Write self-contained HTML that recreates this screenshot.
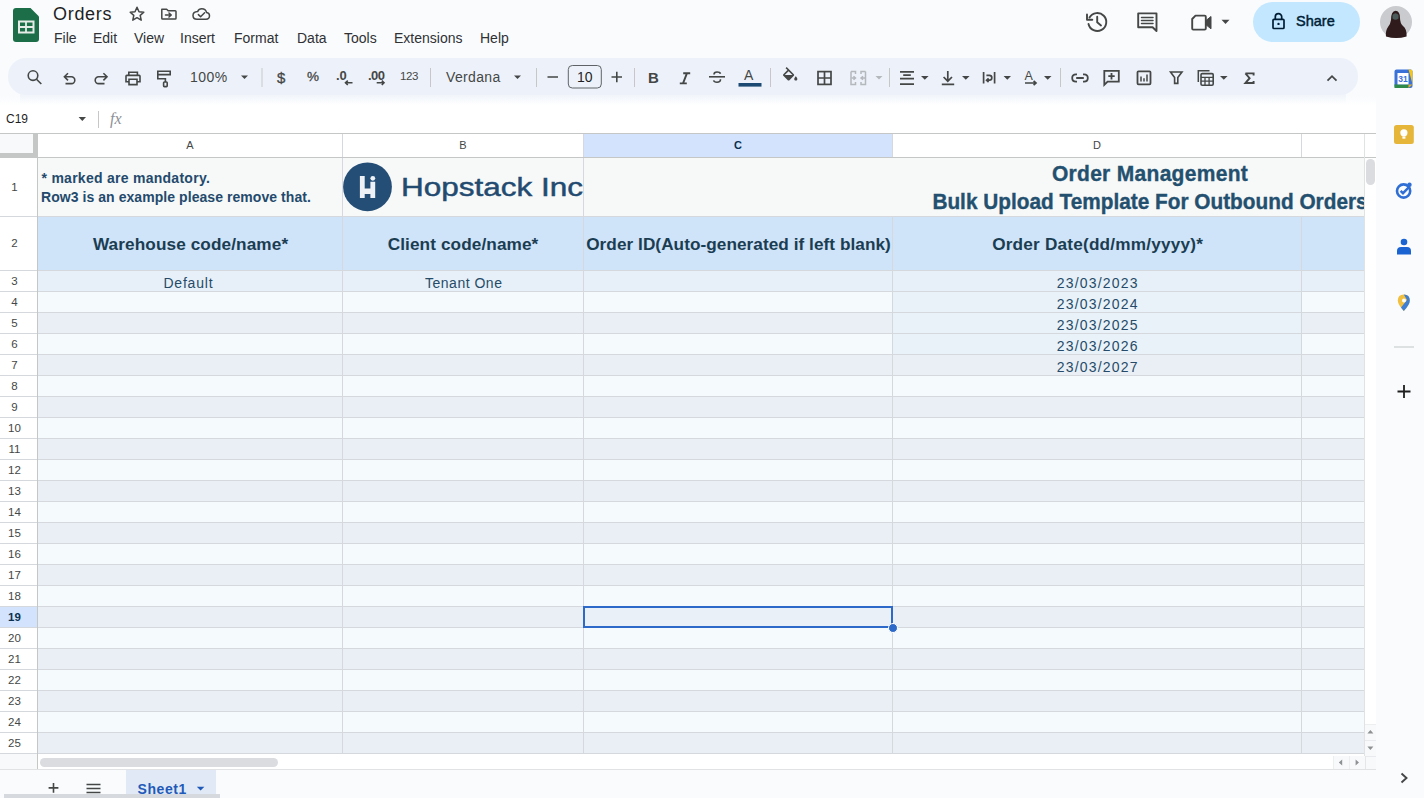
<!DOCTYPE html>
<html><head><meta charset="utf-8">
<style>
*{box-sizing:border-box;margin:0;padding:0}
html,body{width:1424px;height:798px;overflow:hidden;background:#f9fbfd;font-family:"Liberation Sans",sans-serif;color:#1f1f1f;position:relative}
.a{position:absolute}
.menu{position:absolute;top:29.5px;font-size:14px;color:#303134;white-space:nowrap}
.tb{position:absolute;left:8px;top:58px;width:1350px;height:37px;background:#edf2fa;border-radius:18px}
.sep{position:absolute;top:68px;width:1px;height:19px;background:#c7c7c7}
svg{position:absolute;overflow:visible}
.ic{fill:none;stroke:#444746;stroke-width:1.6}
.icf{fill:#444746}
#grid{position:absolute;left:0;top:133px;width:1376px;height:637px;background:#fff;overflow:hidden}
.hl{position:absolute;height:1px;background:#e2e2e2}
.vl{position:absolute;width:1px;background:#e2e2e2}
.rh{position:absolute;left:0;width:37px;font-size:11px;color:#444746;text-align:center}
.ch{position:absolute;top:0;height:24px;line-height:24px;font-size:11px;color:#444746;text-align:center}
.cell{position:absolute;font-family:"Liberation Sans",sans-serif;color:#1c3a56;text-align:center;white-space:nowrap;overflow:hidden}
</style></head><body>
<!-- header -->
<div class="a" style="left:53px;top:3.5px;font-size:18px;color:#1f1f1f;letter-spacing:0.7px">Orders</div>
<div class="menu" style="left:54px">File</div>
<div class="menu" style="left:93px">Edit</div>
<div class="menu" style="left:134px">View</div>
<div class="menu" style="left:180px">Insert</div>
<div class="menu" style="left:234px">Format</div>
<div class="menu" style="left:297px">Data</div>
<div class="menu" style="left:344px">Tools</div>
<div class="menu" style="left:394px">Extensions</div>
<div class="menu" style="left:480px">Help</div>

<div class="a" style="left:0;top:106px;width:1376px;height:27px;background:#fff"></div>
<div class="a" style="left:0;top:96px;width:1376px;height:10px;background:linear-gradient(#f9fbfd,#fff)"></div>
<div class="tb"></div>
<div class="a" style="left:20px;top:90px;width:1326px;height:14px;background:linear-gradient(#edf2fa,rgba(255,255,255,0))"></div>
<svg class="a" style="left:0;top:0" width="1424" height="132" viewBox="0 0 1424 132">
 <!-- logo -->
 <path d="M16 8H30.5L39 16.5V39Q39 42 36 42H16Q13 42 13 39V11Q13 8 16 8Z" fill="#1b6e47"/>
 <rect x="19" y="21.5" width="14.5" height="11" fill="none" stroke="#e6ebe8" stroke-width="2"/>
 <path d="M19 27H33.5M26 21.5V32.5" stroke="#e6ebe8" stroke-width="1.8"/>
 <g fill="none" stroke="#444746" stroke-width="1.5" stroke-linejoin="round" stroke-linecap="round">
 <!-- star -->
 <path d="M137 7.2L139 11.7L143.8 12.2L140.2 15.4L141.2 20.2L137 17.7L132.8 20.2L133.8 15.4L130.2 12.2L135 11.7Z"/>
 <!-- folder -->
 <path d="M161.8 9.2H166.6L168.2 10.8H175.2Q176 10.8 176 11.6V18.2Q176 19 175.2 19H162.6Q161.8 19 161.8 18.2Z"/>
 <path d="M165.5 15H171M169 13L171.2 15L169 17" stroke-width="1.6"/>
 <!-- cloud -->
 <path d="M197 19.2H206Q209.5 19.2 209.5 15.8Q209.5 12.8 206.6 12.5Q205.6 8.8 201.8 8.8Q198.8 8.8 197.6 11.6Q193 11.9 193 15.4Q193 19.2 197 19.2Z"/>
 <path d="M198.4 14.6L200.6 16.7L204.6 12.8"/>
 <!-- history -->
 <path d="M1089.5 17.5A9 9 0 1 1 1088.5 24" stroke-width="1.9"/>
 <path d="M1087 14.5V19.8H1092.3" stroke-width="1.9"/>
 <path d="M1097.2 16.8V22.3L1101 25.5" stroke-width="1.9"/>
 <!-- comment -->
 <path d="M1138.2 13.4H1156.5V31L1152.6 27.2H1138.2Z" stroke-width="1.9"/>
 <path d="M1141.5 17.5H1153M1141.5 20.5H1153M1141.5 23.5H1153" stroke-width="1.5"/>
 <!-- meet -->
 <path d="M1195.5 15.6H1204.6Q1205.8 15.6 1205.8 16.8V28.6Q1205.8 29.6 1204.6 29.6H1193.2Q1192.2 29.6 1192.2 28.6V19Z" stroke-width="1.9"/>
 <path d="M1206 20.5L1211 16.5V28.8L1206 24.8Z" fill="#444746" stroke-width="1"/>
 </g>
 <path d="M1221.5 19.8H1229.5L1225.5 24Z" fill="#444746"/>
 <!-- share pill -->
 <rect x="1253" y="2" width="107" height="40" rx="20" fill="#c2e7ff"/>
 <g fill="none" stroke="#001d35" stroke-width="1.7">
  <rect x="1273" y="19.3" width="11" height="9.2" rx="1"/>
  <path d="M1275.3 19.3V16.8A3.2 3.2 0 0 1 1281.7 16.8V19.3"/>
 </g>
 <circle cx="1278.5" cy="23.9" r="1.2" fill="#001d35"/>
 <!-- avatar -->
 <circle cx="1396" cy="22" r="16" fill="#c9cbce"/>
 <path d="M1386 36.5Q1385.2 31 1388 27Q1390.5 24 1391 20Q1391 11 1395.5 10.8Q1400 11 1400 18Q1400 23 1403 26Q1407 29 1406.6 36.5Q1396 39.5 1386 36.5Z" fill="#2f1b1c"/>
 <path d="M1392.5 15Q1395.5 11.5 1398.5 15V18.5Q1395.5 21 1392.5 18.5Z" fill="#4d5a5a"/>

 <!-- toolbar icons -->
 <g fill="none" stroke="#444746" stroke-width="1.6" stroke-linecap="butt" stroke-linejoin="miter">
  <circle cx="33" cy="75.6" r="4.8"/>
  <path d="M36.5 79.2L41.3 84"/>
  <path d="M68 73.3L64.4 76.8L68 80.4M64.4 76.8H71.4A3.4 3.4 0 0 1 71.4 83.6H65.5"/>
  <path d="M103.4 73.3L107 76.8L103.4 80.4M107 76.8H98.6A3.4 3.4 0 0 0 98.6 83.6H104.5"/>
  <path d="M128.8 75.4V72.2H137.4V75.4M129 81.8H126V76.2Q126 75.4 126.8 75.4H139.2Q140 75.4 140 76.2V81.8H137M129 79.2H137V84.6H129Z"/>
  <path d="M157.8 71.2H170.2V74.6H157.8ZM157.8 74.6V78.8H165.4V82"/>
  <rect x="163.6" y="82" width="3.6" height="4.6" rx="0.8"/>
 </g>
 <path d="M241 75.5H248L244.5 79Z" fill="#444746"/>
 <path d="M514 75.5H521L517.5 79Z" fill="#444746"/>
 <rect x="261.5" y="68" width="1" height="19" fill="#c7c7c7"/>
 <rect x="430" y="68" width="1" height="19" fill="#c7c7c7"/>
 <rect x="536" y="68" width="1" height="19" fill="#c7c7c7"/>
 <rect x="634" y="68" width="1" height="19" fill="#c7c7c7"/>
 <rect x="770" y="68" width="1" height="19" fill="#c7c7c7"/>
 <rect x="889" y="68" width="1" height="19" fill="#c7c7c7"/>
 <rect x="1060" y="68" width="1" height="19" fill="#c7c7c7"/>
 <g fill="none" stroke="#444746" stroke-width="1.6">
  <path d="M345.5 82.8H352.5M347.8 80.6L345.5 82.8L347.8 85"/>
  <path d="M376.7 82.8H384M381.8 80.6L384 82.8L381.8 85"/>
  <path d="M547.5 77H558M611.5 77H622M616.8 71.8V82.2"/>
  <rect x="568.3" y="65.5" width="33" height="22.5" rx="4" stroke="#5f6368" stroke-width="1"/>
  <path d="M709 76.8H725" />
  <path d="M714 74.5Q714 72 717 72Q720 72 720.5 73.8M720.5 79.2Q720.5 82.2 717 82.2Q714 82.2 713.6 80.4"/>
 </g>
 <rect x="738.5" y="83" width="23" height="3.6" fill="#1c4a72"/>
 <path d="M683.2 73.2H690.2M679.8 83.4H686.8M687 73.2L683 83.4" fill="none" stroke="#444746" stroke-width="1.9"/>
 <!-- paint bucket -->
 <path transform="translate(780.6 67) scale(0.8)" d="M16.56 8.94L7.62 0 6.21 1.41l2.38 2.38-5.15 5.15c-.59.59-.59 1.54 0 2.12l5.5 5.5c.29.29.68.44 1.060.44s.77-.15 1.06-.44l5.5-5.5c.59-.58.59-1.53 0-2.12zM5.21 10L10 5.21 14.79 10H5.21zM19 11.5s-2 2.17-2 3.5c0 1.1.9 2 2 2s2-.9 2-2c0-1.33-2-3.5-2-3.5z" fill="#444746"/>
 <!-- borders -->
 <g fill="none" stroke="#444746" stroke-width="1.7">
  <rect x="818" y="71.6" width="13" height="12.8"/>
  <path d="M824.5 71.6V84.4M818 78H831"/>
 </g>
 <!-- merge disabled -->
 <g fill="none" stroke="#b4b8bd" stroke-width="1.5">
  <path d="M851 71.5H855.5V74M851 71.5V84.5H855.5V82M865.5 71.5H861V74M865.5 71.5V84.5H861V82"/>
  <path d="M851.5 78H855.5M853.5 76.2L855.5 78L853.5 79.8M865 78H861M863 76.2L861 78L863 79.8"/>
 </g>
 <path d="M875.5 76H882.5L879 79.5Z" fill="#b4b8bd"/>
 <!-- align -->
 <g fill="none" stroke="#444746" stroke-width="1.7">
  <path d="M900 71.8H914M903.2 75.2H910.8M900 78.6H914M900 84.2H914"/>
  <path d="M947.8 71V81.2M943.6 77L947.8 81.2L952 77M941.8 84.4H954.2"/>
  <path d="M983.6 72V83.4M994.6 72V83.4M986.4 75.4H989.4Q991.8 75.4 991.8 77.8Q991.8 80.2 989.4 80.2H987M988.6 78.4L986.6 80.2L988.6 82"/>
  <path d="M1025 83H1036M1033.6 80.8L1036 83L1033.6 85.2"/>
  <path d="M1038 78A6 0 0 0 0 1038 78"/>
 </g>
 <path d="M921 76H928.6L924.8 79.7Z M962 76H969.6L965.8 79.7Z M1003.6 76H1011L1007.3 79.7Z M1044 76H1051.5L1047.7 79.7Z M1220 76H1227.6L1223.8 79.7Z" fill="#444746"/>
 <text x="1024.6" y="80" font-family="Liberation Sans" font-size="12.5" fill="#444746">A</text>
 <!-- link -->
 <g fill="none" stroke="#444746" stroke-width="1.8">
  <path d="M1077 74.3H1076Q1072.2 74.3 1072.2 78Q1072.2 81.7 1076 81.7H1077M1083 74.3H1084Q1087.8 74.3 1087.8 78Q1087.8 81.7 1084 81.7H1083M1076.2 78H1083.8"/>
  <path d="M1104.3 70.8H1118.8V81.6H1107.6L1104.3 84.9Z"/>
  <path d="M1111.5 73V79.4M1108.3 76.2H1114.7"/>
  <rect x="1137.5" y="71.3" width="13" height="13" rx="1"/>
  <path d="M1141 76.5V81.5M1144 78.2V81.5M1147 74.5V81.5" stroke-width="1.5"/>
  <path d="M1170.5 72H1182L1177.8 77.6V83.4H1174.6V77.6Z" stroke-width="1.6"/>
  <path d="M1209.5 70.8H1198.3V82" stroke-width="1.5"/>
  <rect x="1201" y="73.6" width="12.2" height="11.6" rx="1.2" stroke-width="1.6"/>
  <path d="M1201 77.4H1213.2M1201 81.2H1213.2M1205 77.4V85.2M1209.1 77.4V85.2" stroke-width="1.3"/>
  <path d="M1245.4 73.4H1253.6V75.4M1245.4 73.4L1249.6 78.2L1245.4 83H1253.6V81" stroke-width="1.9" stroke-linejoin="miter"/>
  <path d="M1327.5 80.6L1332 76.2L1336.5 80.6" stroke-width="1.8"/>
 </g>
 <!-- formula bar -->
 <path d="M78.6 117H86L82.3 121Z" fill="#444746"/>
 <rect x="98" y="111" width="1" height="17" fill="#c7c7c7"/>
</svg>
<div class="a" style="left:1296px;top:13px;font-size:14.5px;color:#001d35;-webkit-text-stroke:0.45px #001d35;letter-spacing:0px">Share</div>
<div class="a" style="left:190px;top:69px;font-size:14px;color:#444746;letter-spacing:0.5px">100%</div>
<div class="a" style="left:277px;top:68.5px;font-size:15px;color:#444746;-webkit-text-stroke:0.3px #444746">$</div>
<div class="a" style="left:307px;top:69px;font-size:13.5px;color:#444746;-webkit-text-stroke:0.3px #444746">%</div>
<div class="a" style="left:336px;top:68px;font-size:13px;color:#444746;font-weight:bold">.0</div>
<div class="a" style="left:368px;top:68px;font-size:13px;color:#444746;font-weight:bold;letter-spacing:-0.5px">.00</div>
<div class="a" style="left:400px;top:70px;font-size:11.5px;color:#444746;letter-spacing:-0.4px">123</div>
<div class="a" style="left:446px;top:69px;font-size:14px;color:#444746;letter-spacing:0.35px">Verdana</div>
<div class="a" style="left:577px;top:69px;font-size:14px;color:#1f1f1f">10</div>
<div class="a" style="left:648px;top:68.5px;font-size:15px;color:#444746;font-weight:bold">B</div>

<div class="a" style="left:744px;top:67px;font-size:14px;color:#444746">A</div>
<div class="a" style="left:6px;top:111.8px;font-size:12px;color:#1f1f1f">C19</div>
<div class="a" style="left:110px;top:110px;font-size:16px;color:#8d9096;font-family:'Liberation Serif',serif;font-style:italic">fx</div>

<div class="a" style="left:0;top:133px;width:1376px;height:637px;background:#fff"></div>
<div class="a" style="left:38px;top:158px;width:1326px;height:58px;background:#f7f8f8"></div>
<div class="a" style="left:38px;top:217px;width:1326px;height:53px;background:#cfe3f9"></div>
<div class="a" style="left:38px;top:271px;width:1326px;height:20px;background:#e7f0f8"></div>
<div class="a" style="left:38px;top:292px;width:1326px;height:20px;background:#f5fafd"></div>
<div class="a" style="left:893px;top:292px;width:408px;height:20px;background:#e9f2f8"></div>
<div class="a" style="left:38px;top:313px;width:1326px;height:20px;background:#eaeff6"></div>
<div class="a" style="left:893px;top:313px;width:408px;height:20px;background:#e9f2f8"></div>
<div class="a" style="left:38px;top:334px;width:1326px;height:20px;background:#f5fafd"></div>
<div class="a" style="left:893px;top:334px;width:408px;height:20px;background:#e9f2f8"></div>
<div class="a" style="left:38px;top:355px;width:1326px;height:20px;background:#eaeff6"></div>
<div class="a" style="left:38px;top:376px;width:1326px;height:20px;background:#f5fafd"></div>
<div class="a" style="left:38px;top:397px;width:1326px;height:20px;background:#eaeff6"></div>
<div class="a" style="left:38px;top:418px;width:1326px;height:20px;background:#f5fafd"></div>
<div class="a" style="left:38px;top:439px;width:1326px;height:20px;background:#eaeff6"></div>
<div class="a" style="left:38px;top:460px;width:1326px;height:20px;background:#f5fafd"></div>
<div class="a" style="left:38px;top:481px;width:1326px;height:20px;background:#eaeff6"></div>
<div class="a" style="left:38px;top:502px;width:1326px;height:20px;background:#f5fafd"></div>
<div class="a" style="left:38px;top:523px;width:1326px;height:20px;background:#eaeff6"></div>
<div class="a" style="left:38px;top:544px;width:1326px;height:20px;background:#f5fafd"></div>
<div class="a" style="left:38px;top:565px;width:1326px;height:20px;background:#eaeff6"></div>
<div class="a" style="left:38px;top:586px;width:1326px;height:20px;background:#f5fafd"></div>
<div class="a" style="left:38px;top:607px;width:1326px;height:20px;background:#eaeff6"></div>
<div class="a" style="left:38px;top:628px;width:1326px;height:20px;background:#f5fafd"></div>
<div class="a" style="left:38px;top:649px;width:1326px;height:20px;background:#eaeff6"></div>
<div class="a" style="left:38px;top:670px;width:1326px;height:20px;background:#f5fafd"></div>
<div class="a" style="left:38px;top:691px;width:1326px;height:20px;background:#eaeff6"></div>
<div class="a" style="left:38px;top:712px;width:1326px;height:20px;background:#f5fafd"></div>
<div class="a" style="left:38px;top:733px;width:1326px;height:20px;background:#eaeff6"></div>
<div class="a" style="left:0;top:216px;width:1364px;height:1px;background:#d5d8dd"></div>
<div class="a" style="left:0;top:270px;width:1364px;height:1px;background:#d5d8dd"></div>
<div class="a" style="left:0;top:291px;width:1364px;height:1px;background:#d5d8dd"></div>
<div class="a" style="left:0;top:312px;width:1364px;height:1px;background:#d5d8dd"></div>
<div class="a" style="left:0;top:333px;width:1364px;height:1px;background:#d5d8dd"></div>
<div class="a" style="left:0;top:354px;width:1364px;height:1px;background:#d5d8dd"></div>
<div class="a" style="left:0;top:375px;width:1364px;height:1px;background:#d5d8dd"></div>
<div class="a" style="left:0;top:396px;width:1364px;height:1px;background:#d5d8dd"></div>
<div class="a" style="left:0;top:417px;width:1364px;height:1px;background:#d5d8dd"></div>
<div class="a" style="left:0;top:438px;width:1364px;height:1px;background:#d5d8dd"></div>
<div class="a" style="left:0;top:459px;width:1364px;height:1px;background:#d5d8dd"></div>
<div class="a" style="left:0;top:480px;width:1364px;height:1px;background:#d5d8dd"></div>
<div class="a" style="left:0;top:501px;width:1364px;height:1px;background:#d5d8dd"></div>
<div class="a" style="left:0;top:522px;width:1364px;height:1px;background:#d5d8dd"></div>
<div class="a" style="left:0;top:543px;width:1364px;height:1px;background:#d5d8dd"></div>
<div class="a" style="left:0;top:564px;width:1364px;height:1px;background:#d5d8dd"></div>
<div class="a" style="left:0;top:585px;width:1364px;height:1px;background:#d5d8dd"></div>
<div class="a" style="left:0;top:606px;width:1364px;height:1px;background:#d5d8dd"></div>
<div class="a" style="left:0;top:627px;width:1364px;height:1px;background:#d5d8dd"></div>
<div class="a" style="left:0;top:648px;width:1364px;height:1px;background:#d5d8dd"></div>
<div class="a" style="left:0;top:669px;width:1364px;height:1px;background:#d5d8dd"></div>
<div class="a" style="left:0;top:690px;width:1364px;height:1px;background:#d5d8dd"></div>
<div class="a" style="left:0;top:711px;width:1364px;height:1px;background:#d5d8dd"></div>
<div class="a" style="left:0;top:732px;width:1364px;height:1px;background:#d5d8dd"></div>
<div class="a" style="left:0;top:753px;width:1364px;height:1px;background:#d5d8dd"></div>
<div class="a" style="left:342px;top:134px;width:1px;height:619px;background:#d5d8dd"></div>
<div class="a" style="left:583px;top:134px;width:1px;height:619px;background:#d5d8dd"></div>
<div class="a" style="left:892px;top:134px;width:1px;height:23px;background:#d5d8dd"></div>
<div class="a" style="left:892px;top:216px;width:1px;height:537px;background:#d5d8dd"></div>
<div class="a" style="left:1301px;top:134px;width:1px;height:23px;background:#d5d8dd"></div>
<div class="a" style="left:1301px;top:216px;width:1px;height:537px;background:#d5d8dd"></div>
<div class="a" style="left:0;top:133px;width:1376px;height:1px;background:#c4c7c5"></div>
<div class="a" style="left:0;top:157px;width:1376px;height:1px;background:#c4c7c5"></div>
<div class="a" style="left:37px;top:134px;width:1px;height:619px;background:#c4c7c5"></div>
<div class="a" style="left:584px;top:134px;width:308px;height:23px;background:#d3e3fd"></div>
<div class="a" style="left:0;top:134px;width:33px;height:19px;background:#f8f9fa"></div>
<div class="a" style="left:33px;top:134px;width:4px;height:23px;background:#c4c7c5"></div>
<div class="a" style="left:0;top:153px;width:37px;height:4px;background:#c4c7c5"></div>
<div class="a" style="left:38px;top:134px;width:304px;height:23px;line-height:23px;text-align:center;font-size:11px;font-weight:normal;color:#444746">A</div>
<div class="a" style="left:343px;top:134px;width:240px;height:23px;line-height:23px;text-align:center;font-size:11px;font-weight:normal;color:#444746">B</div>
<div class="a" style="left:584px;top:134px;width:308px;height:23px;line-height:23px;text-align:center;font-size:11px;font-weight:bold;color:#0b3050">C</div>
<div class="a" style="left:893px;top:134px;width:408px;height:23px;line-height:23px;text-align:center;font-size:11px;font-weight:normal;color:#444746">D</div>
<div class="a" style="left:0;top:607px;width:37px;height:20px;background:#d3e3fd"></div>
<div class="a" style="left:0;top:158px;width:29px;height:58px;line-height:58px;text-align:center;font-size:11.5px;font-weight:normal;color:#444746">1</div>
<div class="a" style="left:0;top:217px;width:29px;height:53px;line-height:53px;text-align:center;font-size:11.5px;font-weight:normal;color:#444746">2</div>
<div class="a" style="left:0;top:271px;width:29px;height:20px;line-height:20px;text-align:center;font-size:11.5px;font-weight:normal;color:#444746">3</div>
<div class="a" style="left:0;top:292px;width:29px;height:20px;line-height:20px;text-align:center;font-size:11.5px;font-weight:normal;color:#444746">4</div>
<div class="a" style="left:0;top:313px;width:29px;height:20px;line-height:20px;text-align:center;font-size:11.5px;font-weight:normal;color:#444746">5</div>
<div class="a" style="left:0;top:334px;width:29px;height:20px;line-height:20px;text-align:center;font-size:11.5px;font-weight:normal;color:#444746">6</div>
<div class="a" style="left:0;top:355px;width:29px;height:20px;line-height:20px;text-align:center;font-size:11.5px;font-weight:normal;color:#444746">7</div>
<div class="a" style="left:0;top:376px;width:29px;height:20px;line-height:20px;text-align:center;font-size:11.5px;font-weight:normal;color:#444746">8</div>
<div class="a" style="left:0;top:397px;width:29px;height:20px;line-height:20px;text-align:center;font-size:11.5px;font-weight:normal;color:#444746">9</div>
<div class="a" style="left:0;top:418px;width:29px;height:20px;line-height:20px;text-align:center;font-size:11.5px;font-weight:normal;color:#444746">10</div>
<div class="a" style="left:0;top:439px;width:29px;height:20px;line-height:20px;text-align:center;font-size:11.5px;font-weight:normal;color:#444746">11</div>
<div class="a" style="left:0;top:460px;width:29px;height:20px;line-height:20px;text-align:center;font-size:11.5px;font-weight:normal;color:#444746">12</div>
<div class="a" style="left:0;top:481px;width:29px;height:20px;line-height:20px;text-align:center;font-size:11.5px;font-weight:normal;color:#444746">13</div>
<div class="a" style="left:0;top:502px;width:29px;height:20px;line-height:20px;text-align:center;font-size:11.5px;font-weight:normal;color:#444746">14</div>
<div class="a" style="left:0;top:523px;width:29px;height:20px;line-height:20px;text-align:center;font-size:11.5px;font-weight:normal;color:#444746">15</div>
<div class="a" style="left:0;top:544px;width:29px;height:20px;line-height:20px;text-align:center;font-size:11.5px;font-weight:normal;color:#444746">16</div>
<div class="a" style="left:0;top:565px;width:29px;height:20px;line-height:20px;text-align:center;font-size:11.5px;font-weight:normal;color:#444746">17</div>
<div class="a" style="left:0;top:586px;width:29px;height:20px;line-height:20px;text-align:center;font-size:11.5px;font-weight:normal;color:#444746">18</div>
<div class="a" style="left:0;top:607px;width:29px;height:20px;line-height:20px;text-align:center;font-size:11.5px;font-weight:bold;color:#0b3050">19</div>
<div class="a" style="left:0;top:628px;width:29px;height:20px;line-height:20px;text-align:center;font-size:11.5px;font-weight:normal;color:#444746">20</div>
<div class="a" style="left:0;top:649px;width:29px;height:20px;line-height:20px;text-align:center;font-size:11.5px;font-weight:normal;color:#444746">21</div>
<div class="a" style="left:0;top:670px;width:29px;height:20px;line-height:20px;text-align:center;font-size:11.5px;font-weight:normal;color:#444746">22</div>
<div class="a" style="left:0;top:691px;width:29px;height:20px;line-height:20px;text-align:center;font-size:11.5px;font-weight:normal;color:#444746">23</div>
<div class="a" style="left:0;top:712px;width:29px;height:20px;line-height:20px;text-align:center;font-size:11.5px;font-weight:normal;color:#444746">24</div>
<div class="a" style="left:0;top:733px;width:29px;height:20px;line-height:20px;text-align:center;font-size:11.5px;font-weight:normal;color:#444746">25</div>
<div class="a" style="left:41.5px;top:170.9px;line-height:14px;font-size:14px;font-weight:bold;letter-spacing:0.27px;color:#234a6c;white-space:nowrap;">* marked are mandatory.</div>
<div class="a" style="left:41px;top:189.85px;line-height:14px;font-size:14px;font-weight:bold;letter-spacing:0.06px;color:#234a6c;white-space:nowrap;">Row3 is an example please remove that.</div>
<div class="a" style="left:-109.5px;top:236px;width:600px;text-align:center;line-height:17.2px;font-size:17.2px;font-weight:bold;letter-spacing:0.1px;text-indent:0.1px;color:#1b3d52;white-space:nowrap;font-family:'Liberation Sans';">Warehouse code/name*</div>
<div class="a" style="left:163px;top:236px;width:600px;text-align:center;line-height:17.2px;font-size:17.2px;font-weight:bold;letter-spacing:0.1px;text-indent:0.1px;color:#1b3d52;white-space:nowrap;font-family:'Liberation Sans';">Client code/name*</div>
<div class="a" style="left:438.5px;top:236px;width:600px;text-align:center;line-height:17.2px;font-size:17.2px;font-weight:bold;letter-spacing:0.05px;text-indent:0.05px;color:#1b3d52;white-space:nowrap;font-family:'Liberation Sans';">Order ID(Auto-generated if left blank)</div>
<div class="a" style="left:797.5px;top:236px;width:600px;text-align:center;line-height:17.2px;font-size:17.2px;font-weight:bold;letter-spacing:0.2px;text-indent:0.2px;color:#1b3d52;white-space:nowrap;font-family:'Liberation Sans';">Order Date(dd/mm/yyyy)*</div>
<div class="a" style="left:-112px;top:276.05px;width:600px;text-align:center;line-height:14px;font-size:14px;font-weight:normal;letter-spacing:0.8px;text-indent:0.8px;color:#264b68;white-space:nowrap;font-family:'Liberation Sans';">Default</div>
<div class="a" style="left:163.5px;top:276.05px;width:600px;text-align:center;line-height:14px;font-size:14px;font-weight:normal;letter-spacing:0.5px;text-indent:0.5px;color:#264b68;white-space:nowrap;font-family:'Liberation Sans';">Tenant One</div>
<div class="a" style="left:797.2px;top:276.05px;width:600px;text-align:center;line-height:14px;font-size:14px;font-weight:normal;letter-spacing:1.2px;text-indent:1.2px;color:#264b68;white-space:nowrap;font-family:'Liberation Sans';">23/03/2023</div>
<div class="a" style="left:797.2px;top:297.05px;width:600px;text-align:center;line-height:14px;font-size:14px;font-weight:normal;letter-spacing:1.2px;text-indent:1.2px;color:#264b68;white-space:nowrap;font-family:'Liberation Sans';">23/03/2024</div>
<div class="a" style="left:797.2px;top:318.05px;width:600px;text-align:center;line-height:14px;font-size:14px;font-weight:normal;letter-spacing:1.2px;text-indent:1.2px;color:#264b68;white-space:nowrap;font-family:'Liberation Sans';">23/03/2025</div>
<div class="a" style="left:797.2px;top:339.05px;width:600px;text-align:center;line-height:14px;font-size:14px;font-weight:normal;letter-spacing:1.2px;text-indent:1.2px;color:#264b68;white-space:nowrap;font-family:'Liberation Sans';">23/03/2026</div>
<div class="a" style="left:797.2px;top:360.05px;width:600px;text-align:center;line-height:14px;font-size:14px;font-weight:normal;letter-spacing:1.2px;text-indent:1.2px;color:#264b68;white-space:nowrap;font-family:'Liberation Sans';">23/03/2027</div>
<div class="a" style="left:893px;top:158px;width:471px;height:58px;overflow:hidden">
<div class="a" style="left:-43px;top:4.800000000000011px;width:600px;text-align:center;line-height:21px;font-size:21px;font-weight:bold;letter-spacing:0.3px;color:#24506f;-webkit-text-stroke:0.35px #24506f;white-space:nowrap;transform-origin:50% 17.78px;transform:scaleY(1.07)">Order Management</div>
<div class="a" style="left:-43px;top:34.099999999999994px;width:600px;text-align:center;line-height:20.8px;font-size:20.8px;font-weight:bold;color:#24506f;-webkit-text-stroke:0.35px #24506f;white-space:nowrap;transform-origin:50% 17.6px;transform:scaleY(1.09)">Bulk Upload Template For Outbound Orders</div>
</div>
<div class="a" style="left:343px;top:158px;width:240px;height:58px;overflow:hidden">
<svg class="a" style="left:0;top:0" width="60" height="58" viewBox="343 158 60 58"><circle cx="367.5" cy="186.8" r="24.4" fill="#244e75"/><path d="M359.9 175.9H364.7V188.4H370.4V181.7H375.2V197.9H370.4V193.9H364.7V197.9H359.9Z" fill="#eef2f6"/><circle cx="372.8" cy="178.3" r="2.4" fill="#eef2f6"/></svg>
<div class="a" style="left:58px;top:16.71425000000002px;line-height:25.5px;font-size:25.5px;font-weight:normal;-webkit-text-stroke:0.45px #234b70;color:#234b70;white-space:nowrap;transform-origin:0 0;transform:scaleX(1.235)">Hopstack Inc</div>
</div>
<div class="a" style="left:583px;top:606px;width:310px;height:22px;border:2px solid #2d69c8;background:#e9f0f8"></div>
<div class="a" style="left:887.5px;top:622.5px;width:10px;height:10px;border-radius:50%;background:#2d69c8;border:1px solid #fff"></div>
<!-- scrollbars -->
<div class="a" style="left:0;top:754px;width:37px;height:15px;background:#f8f9fa"></div>
<div class="a" style="left:37px;top:753px;width:1px;height:16px;background:#c4c7c5"></div>
<div class="a" style="left:0;top:769px;width:1376px;height:1px;background:#e0e2e4"></div>
<div class="a" style="left:1364px;top:134px;width:1px;height:622px;background:#e0e2e4"></div>
<div class="a" style="left:1366px;top:159px;width:8.5px;height:26px;border-radius:5px;background:#dadce0"></div>
<div class="a" style="left:1365px;top:724px;width:11px;height:32px;background:#f8f9fa"></div>
<div class="a" style="left:1333px;top:756px;width:43px;height:13px;background:#f8f9fa"></div>
<div class="a" style="left:1365px;top:740px;width:11px;height:1px;background:#e8eaed"></div>
<div class="a" style="left:1365px;top:724px;width:11px;height:1px;background:#eceef0"></div>
<div class="a" style="left:1365px;top:756px;width:11px;height:1px;background:#e8eaed"></div>
<svg class="a" style="left:0;top:0" width="1424" height="798" viewBox="0 0 1424 798">
 <path d="M1367.4 733.5H1373.4L1370.4 730Z M1367.4 746.6H1373.4L1370.4 750Z M1342.2 759.5V765.5L1338.8 762.5Z M1355.6 759.5V765.5L1359 762.5Z" fill="#8e9194"/>
 <rect x="1333" y="756" width="1" height="13" fill="#eceef0"/>
 <rect x="1349" y="756" width="1" height="13" fill="#eceef0"/>
 <rect x="1365" y="756" width="1" height="13" fill="#e4e6e8"/>
 <rect x="40" y="758" width="238" height="9" rx="4.5" fill="#dadce0"/>
 <!-- side panel icons -->
 <rect x="1394.5" y="69.6" width="18" height="18.4" rx="2" fill="#3a72d8"/>
 <path d="M1408.5 69.6H1410.5Q1412.5 69.6 1412.5 71.6V84Z" fill="#f5c518"/>
 <rect x="1394.5" y="84.4" width="14" height="3.6" fill="#2f8a4a"/>
 <path d="M1408.5 84.4H1412.5L1408.5 88Z" fill="#e8b020"/>
 <rect x="1397.5" y="73" width="11" height="11.4" fill="#fff"/>
 <text x="1398.3" y="82.3" font-family="Liberation Sans" font-size="8.5" fill="#3a72d8" font-weight="bold">31</text>
 <rect x="1394" y="125" width="19.8" height="19" rx="2.5" fill="#e6b63a"/>
 <circle cx="1403.9" cy="132.8" r="3.6" fill="#fff"/>
 <rect x="1402.4" y="136.5" width="3" height="2.2" fill="#fff"/>
 <circle cx="1403.6" cy="191" r="6.6" fill="none" stroke="#2f6ed4" stroke-width="2.6"/>
 <path d="M1400.6 190.8L1403 193.2L1409.5 186.6" fill="none" stroke="#2f6ed4" stroke-width="2.4"/>
 <circle cx="1409.5" cy="184.8" r="2.2" fill="#2f6ed4"/>
 <circle cx="1404" cy="242" r="3.3" fill="#1a63d3"/>
 <path d="M1397 254.5V251Q1397 247 1401 247H1407Q1411 247 1411 251V254.5Z" fill="#1a63d3"/>
 <path d="M1403.8 294.5Q1409.8 294.5 1409.8 300.5Q1409.8 304.5 1403.8 311Q1397.8 304.5 1397.8 300.5Q1397.8 294.5 1403.8 294.5Z" fill="#f2c040"/>
 <path d="M1403.8 294.5Q1409.8 294.5 1409.8 300.5Q1409.8 304.5 1403.8 311L1401 307.5L1407 300Z" fill="#3d7fd6"/>
 <circle cx="1404" cy="300.5" r="2" fill="#fff"/>
 <rect x="1394" y="346.5" width="20" height="1" fill="#c4c7c5"/>
 <path d="M1404 385V398M1397.5 391.5H1410.5" stroke="#1f1f1f" stroke-width="1.8"/>
 <path d="M1401.5 773.5L1406.5 778L1401.5 782.5" fill="none" stroke="#444746" stroke-width="1.9"/>
 <!-- bottom tab bar -->
 <path d="M53.5 783V792.8M48.6 787.9H58.4" stroke="#444746" stroke-width="1.6"/>
 <path d="M86.5 784.5H100.5M86.5 788.5H100.5M86.5 792.5H100.5" stroke="#444746" stroke-width="1.6"/>
</svg>
<div class="a" style="left:126px;top:770px;width:90px;height:28px;background:#e1e9f7"></div>
<div class="a" style="left:137.5px;top:781px;font-size:14px;font-weight:bold;color:#1f5ab8;letter-spacing:0.6px">Sheet1</div>
<svg class="a" style="left:0;top:0" width="1424" height="798" viewBox="0 0 1424 798"><path d="M196.8 786.8H204.4L200.6 790.6Z" fill="#1f5ab8"/></svg>
<div class="a" style="left:4px;top:794px;width:216px;height:4px;background:#d6dadf"></div>
<div class="a" style="left:1401px;top:773px;width:0;height:0"></div>

</body></html>
